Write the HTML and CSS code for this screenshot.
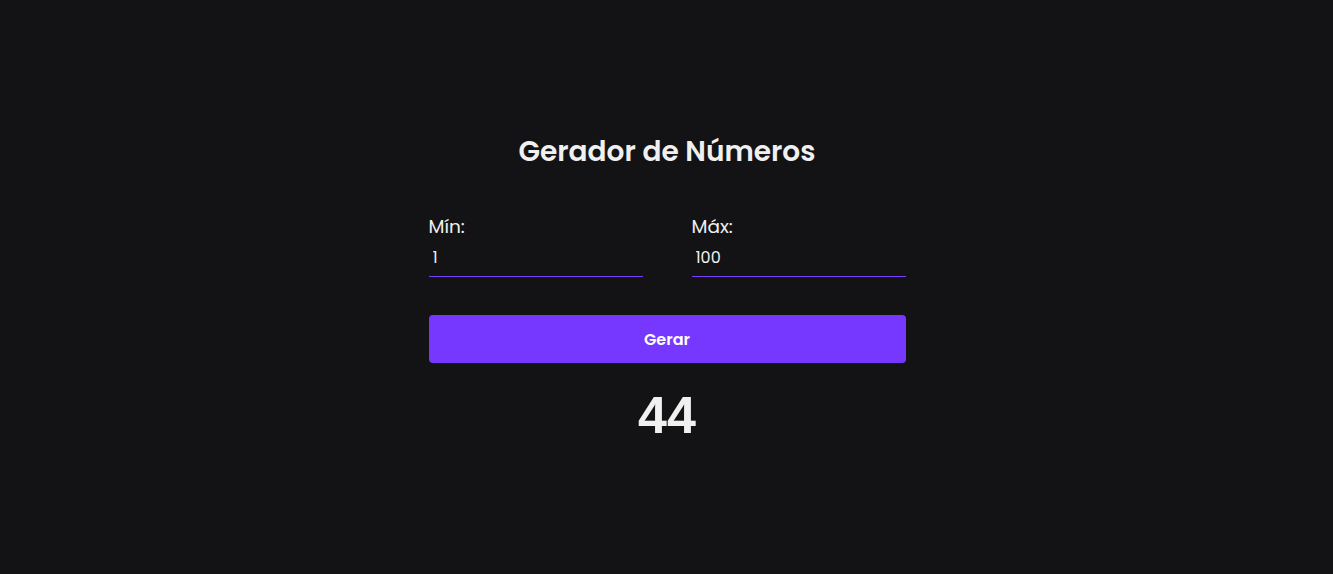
FILE: index.html
```html
<!DOCTYPE html>
<html lang="pt-BR">
<head>
    <meta charset="UTF-8">
    <meta name="viewport" content="width=device-width, initial-scale=1.0">
    <title>Gerador de Números</title>
    <link rel="stylesheet" href="styles.css">
</head>
<body>

    <div class="container">
        <h1 class="title">Gerador de Números</h1>
        <div class="fields">
            <div class="field">
                <label for="min">Mín:</label>
                <input type="number" id="min" value="1">
            </div>
            <div class="field">
                <label for="max">Máx:</label>
                <input type="number" id="max" value="100">
            </div>
        </div>
        <button class="generate" onclick="generate()">Gerar</button>
        <div class="result" id="result">44</div>
    </div>

    <script>
        function generate() {
            const min = parseInt(document.getElementById('min').value);
            const max = parseInt(document.getElementById('max').value);
            const n = Math.floor(Math.random() * (max - min + 1)) + min;
            document.getElementById('result').textContent = n;
        }
    </script>

</body>
</html>
```

FILE: styles.css
```css
* {
    box-sizing: border-box;
}
body {
    margin: 0;
    height: 100vh;
    display: flex;
    justify-content: center;
    align-items: flex-start;
    background-color: #131315;
    color: #f0f0f0;
    font-family: 'Poppins', 'Inter', sans-serif;
}
.container {
    width: 477px;
    margin: 132px 0 0 1px;
    display: flex;
    flex-direction: column;
}
.title {
    margin: 0 0 42px;
    font-size: 28px;
    font-weight: 600;
    line-height: 40px;
    text-align: center;
}
.fields {
    display: flex;
    gap: 49px;
}
.field {
    flex: 1;
    min-width: 0;
    display: flex;
    flex-direction: column;
}
.field label {
    display: block;
    height: 26px;
    font-size: 18.5px;
    line-height: 26px;
    margin-bottom: 3px;
}
.field input {
    width: 100%;
    height: 34px;
    background: transparent;
    border: none;
    box-shadow: inset 0 -1px 0 #7a3cff;
    color: #f0f0f0;
    font-family: inherit;
    font-size: 16px;
    line-height: 24px;
    padding: 2px 4px 8px;
    outline: none;
}
.field input::-webkit-inner-spin-button,
.field input::-webkit-outer-spin-button {
    -webkit-appearance: none;
    margin: 0;
}
.generate {
    margin-top: 38px;
    height: 48px;
    border: none;
    border-radius: 4px;
    background-color: #7638ff;
    color: white;
    font-family: inherit;
    font-size: 16px;
    font-weight: 600;
    cursor: pointer;
}
.result {
    margin-top: 22px;
    font-family: 'Liberation Sans', Arial, sans-serif;
    font-size: 52px;
    font-weight: bold;
    text-align: center;
    line-height: 60px;
}
```
